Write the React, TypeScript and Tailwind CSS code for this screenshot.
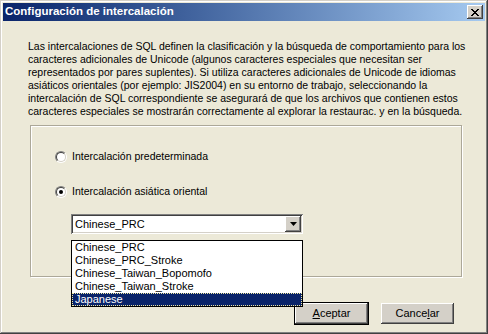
import React from 'react';

const font = { fontFamily: '"Liberation Sans", Arial, sans-serif' };

const lines = [
  'Las intercalaciones de SQL definen la clasificación y la búsqueda de comportamiento para los',
  'caracteres adicionales de Unicode (algunos caracteres especiales que necesitan ser',
  'representados por pares suplentes). Si utiliza caracteres adicionales de Unicode de idiomas',
  'asiáticos orientales (por ejemplo: JIS2004) en su entorno de trabajo, seleccionando la',
  'intercalación de SQL correspondiente se asegurará de que los archivos que contienen estos',
  'caracteres especiales se mostrarán correctamente al explorar la restaurac. y en la búsqueda.',
];

const options = ['Chinese_PRC', 'Chinese_PRC_Stroke', 'Chinese_Taiwan_Bopomofo', 'Chinese_Taiwan_Stroke', 'Japanese'];

function Radio({ checked, label }: { checked?: boolean; label: string }) {
  return (
    <div className="flex items-center gap-[5px]">
      <span className="flex h-[12px] w-[12px] rounded-full border border-t-[#808080] border-l-[#808080] border-b-white border-r-white">
        <span className="flex h-full w-full items-center justify-center rounded-full border border-t-[#404040] border-l-[#404040] border-b-[#d4d0c8] border-r-[#d4d0c8] bg-white">
          {checked && <span className="h-[4px] w-[4px] rounded-full bg-black" />}
        </span>
      </span>
      <span className="text-[10.5px] leading-[13px] text-black">{label}</span>
    </div>
  );
}

function Button({ children, def }: { children: React.ReactNode; def?: boolean }) {
  return (
    <div className={def ? 'border border-black' : 'border border-transparent'}>
      <div className="flex h-[21px] w-[73px] items-center justify-center bg-[#d4d0c8] text-[11px] text-black shadow-[inset_-1px_-1px_#404040,inset_1px_1px_#fff,inset_-2px_-2px_#808080,inset_2px_2px_#d4d0c8]">
        {children}
      </div>
    </div>
  );
}

export default function App() {
  return (
    <div
      className="flex h-[334px] w-[488px] flex-col bg-[#ece9d8] p-[3px] shadow-[inset_-1px_-1px_#404040,inset_1px_1px_#d4d0c8,inset_-2px_-2px_#808080,inset_2px_2px_#fff]"
      style={font}
    >
      <div className="flex h-[18px] items-center justify-between bg-gradient-to-r from-[#0a246a] to-[#a6caf0] pl-[2px] pr-[2px]">
        <span className="text-[11.5px] font-bold text-white">Configuración de intercalación</span>
        <div className="flex h-[14px] w-[16px] items-center justify-center bg-[#d4d0c8] shadow-[inset_-1px_-1px_#404040,inset_1px_1px_#fff,inset_-2px_-2px_#808080]">
          <svg width="8" height="7" viewBox="0 0 8 7">
            <path d="M0 0h2v1h1v1h2V1h1V0h2v1H7v1H6v1H5v1h1v1h1v1h1v1H6V6H5V5H3v1H2v1H0V6h1V5h1V4h1V3H2V2H1V1H0z" fill="#000" />
          </svg>
        </div>
      </div>

      <div className="mt-[19px] pl-[25px] text-[10.5px] leading-[13px] text-black">
        {lines.map((l) => (
          <div key={l} className="whitespace-nowrap">{l}</div>
        ))}
      </div>

      <div className="relative ml-[27px] mt-[7px] h-[152px] w-[432px] border border-[#aca899] shadow-[1px_1px_#fff,inset_1px_1px_#fff]">
        <div className="flex flex-col pl-[24px] pt-[24px]">
          <Radio label="Intercalación predeterminada" />
          <div className="mt-[22px]">
            <Radio checked label="Intercalación asiática oriental" />
          </div>
          <div className="mt-[16px] ml-[16px] flex h-[20px] w-[232px] items-center bg-white shadow-[inset_1px_1px_#808080,inset_-1px_-1px_#fff,inset_2px_2px_#404040,inset_-2px_-2px_#d4d0c8] pl-[4px] pr-[2px]">
            <span className="flex-1 text-[11px]">Chinese_PRC</span>
            <div className="flex h-[16px] w-[16px] items-center justify-center bg-[#d4d0c8] shadow-[inset_-1px_-1px_#404040,inset_1px_1px_#fff,inset_-2px_-2px_#808080]">
              <svg width="7" height="4" viewBox="0 0 7 4">
                <path d="M0 0h7L3.5 4z" fill="#000" />
              </svg>
            </div>
          </div>
        </div>
        <div className="absolute left-[40px] top-[114px] z-10 flex w-[232px] flex-col border border-black bg-white">
          {options.map((o) => (
            <div
              key={o}
              className={
                o === 'Japanese'
                  ? 'h-[13px] border border-dotted border-[#f0e8a0] bg-[#0a246a] pl-[2px] text-[11px] leading-[11px] text-white'
                  : 'h-[13px] pl-[3px] text-[11px] leading-[13px] text-black'
              }
            >
              {o}
            </div>
          ))}
        </div>
      </div>

      <div className="mt-[25px] flex justify-end gap-[11px] pr-[30px]">
        <Button def>
          <span><u>A</u>ceptar</span>
        </Button>
        <Button>
          <span>Cance<u>l</u>ar</span>
        </Button>
      </div>
    </div>
  );
}
